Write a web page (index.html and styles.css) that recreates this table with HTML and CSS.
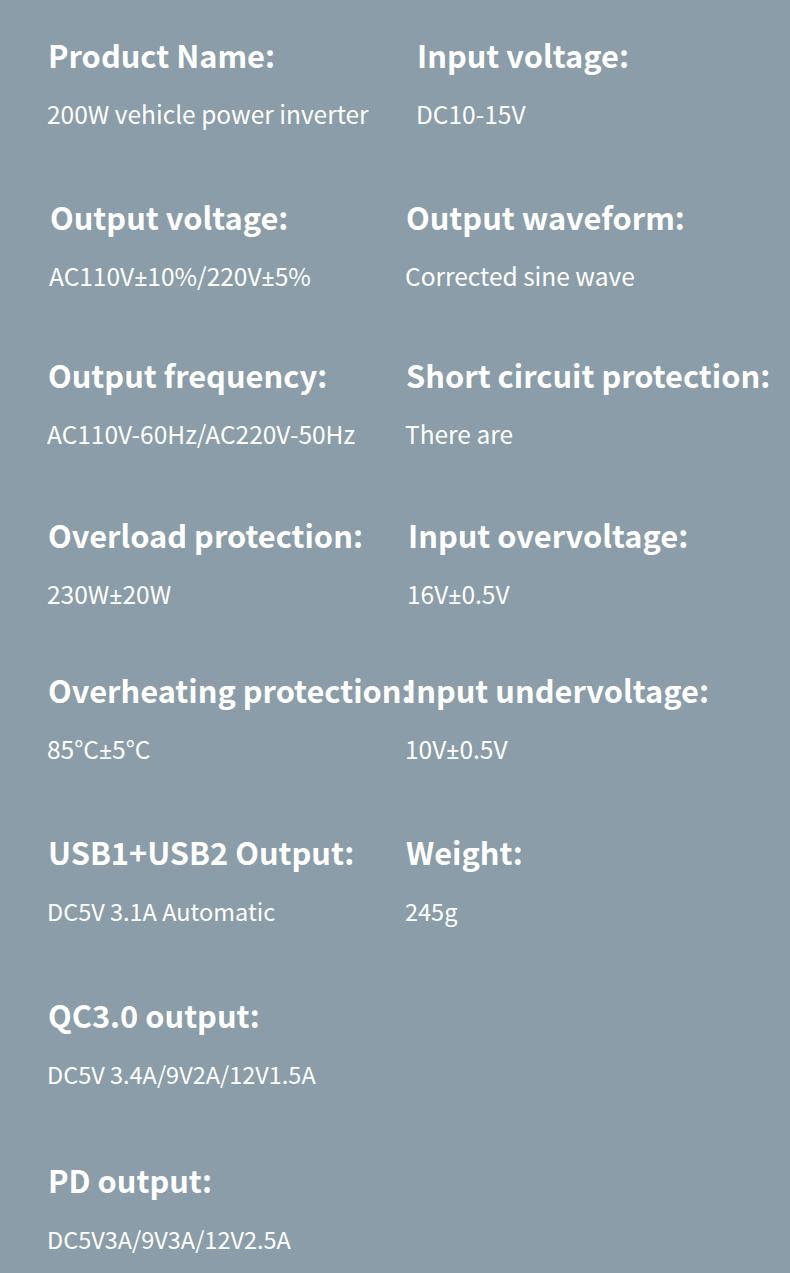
FILE: index.html
```html
<!DOCTYPE html>
<html>
<head>
<meta charset="utf-8">
<link rel="stylesheet" href="styles.css">
</head>
<body>
<main class="specs">
  <section class="row r1">
    <div class="item"><h2 class="label">Product Name:</h2><p class="value">200W vehicle power inverter</p></div>
    <div class="item shift"><h2 class="label">Input voltage:</h2><p class="value">DC10-15V</p></div>
  </section>
  <section class="row r2">
    <div class="item nudge"><h2 class="label">Output voltage:</h2><p class="value">AC110V<span class="pm">±</span>10%/220V<span class="pm">±</span>5%</p></div>
    <div class="item"><h2 class="label">Output waveform:</h2><p class="value">Corrected sine wave</p></div>
  </section>
  <section class="row r3">
    <div class="item"><h2 class="label">Output frequency:</h2><p class="value">AC110V-60Hz/AC220V-50Hz</p></div>
    <div class="item"><h2 class="label">Short circuit protection:</h2><p class="value">There are</p></div>
  </section>
  <section class="row r4">
    <div class="item"><h2 class="label">Overload protection:</h2><p class="value">230W<span class="pm">±</span>20W</p></div>
    <div class="item tiny"><h2 class="label">Input overvoltage:</h2><p class="value">16V<span class="pm">±</span>0.5V</p></div>
  </section>
  <section class="row r5">
    <div class="item"><h2 class="label">Overheating protection:</h2><p class="value">85°C<span class="pm">±</span>5°C</p></div>
    <div class="item"><h2 class="label">Input undervoltage:</h2><p class="value">10V<span class="pm">±</span>0.5V</p></div>
  </section>
  <section class="row r6">
    <div class="item"><h2 class="label">USB1+USB2 Output:</h2><p class="value small">DC5V 3.1A Automatic</p></div>
    <div class="item"><h2 class="label">Weight:</h2><p class="value small">245g</p></div>
  </section>
  <section class="row r7">
    <div class="item"><h2 class="label">QC3.0 output:</h2><p class="value small">DC5V 3.4A/9V2A/12V1.5A</p></div>
  </section>
  <section class="row r8">
    <div class="item"><h2 class="label">PD output:</h2><p class="value small">DC5V3A/9V3A/12V2.5A</p></div>
  </section>
</main>
</body>
</html>
```
FILE: styles.css
```css
html, body {
  margin: 0;
  padding: 0;
}
body {
  background: #8a9da8;
  width: 790px;
  height: 1273px;
  overflow: hidden;
  font-family: "Noto Sans CJK SC", "Noto Sans", sans-serif;
  color: #ffffff;
}
.specs {
  padding: 34px 0 0 48px;
}
.row {
  display: grid;
  grid-template-columns: 358px 1fr;
  height: 160px;
}
.r1 { height: 162px; }
.r2 { height: 158px; }
.r3 { height: 160px; }
.r4 { height: 155px; }
.r5 { height: 162px; }
.r6 { height: 163px; }
.r7 { height: 165px; }
.item {
  display: flex;
  flex-direction: column;
  white-space: nowrap;
}
.shift { padding-left: 11px; }
.nudge { padding-left: 2px; }
.tiny { padding-left: 2px; }
.label {
  margin: 0;
  font-size: 30.8px;
  font-weight: 700;
  line-height: 42px;
}
.value {
  margin: 23px 0 0 -1px;
  font-size: 24.5px;
  font-weight: 400;
  line-height: 30px;
}
.value.small {
  font-size: 23.5px;
}
.pm {
  font-family: "Noto Sans", sans-serif;
  font-size: 23px;
}
```
